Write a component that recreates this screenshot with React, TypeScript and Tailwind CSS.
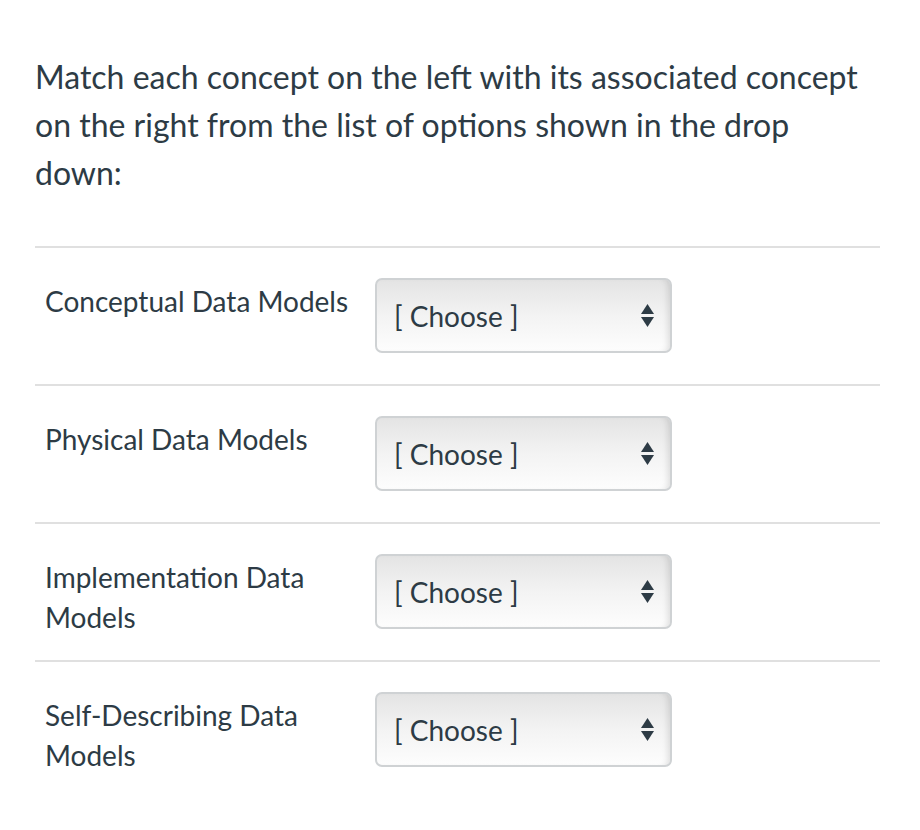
import React from 'react';

const rows = [
  'Conceptual Data Models',
  'Physical Data Models',
  'Implementation Data Models',
  'Self-Describing Data Models',
];

function ChooseSelect() {
  return (
    <div className="relative w-[297px] h-[75px] rounded-[7px] border-2 border-[#cfd2d4] bg-gradient-to-b from-[#e4e4e4] via-[#f3f3f3] to-[#fdfdfd] shadow-[inset_-6px_0_6px_-4px_rgba(0,0,0,0.12)] flex items-center pl-[17px] pr-[16px]">
      <span className="text-[28px] leading-none text-[#2d3b45]">[ Choose ]</span>
      <svg className="ml-auto" width="13" height="24" viewBox="0 0 13 24">
        <polygon points="6.5,0 13,10 0,10" fill="#2d3b45" />
        <polygon points="0,13 13,13 6.5,23" fill="#2d3b45" />
      </svg>
    </div>
  );
}

export default function App() {
  return (
    <div className="w-[920px] h-[830px] bg-white font-['Lato','Noto_Sans',sans-serif] text-[#2d3b45]">
      <div className="pl-[35px] pr-[40px] pt-[53px]">
        <p className="text-[32px] leading-[48px] pr-[10px]">
          Match each concept on the left with its associated concept on the right from the list of options shown in the drop down:
        </p>
        <div className="mt-[49px]">
          {rows.map((label) => (
            <div key={label} className="border-t-2 border-[#e0e0e0] h-[138px] flex pl-[10px]">
              <div className="w-[330px] pr-[20px] pt-[33px] text-[28px] leading-[40px]">{label}</div>
              <div className="pt-[30px]">
                <ChooseSelect />
              </div>
            </div>
          ))}
        </div>
      </div>
    </div>
  );
}
